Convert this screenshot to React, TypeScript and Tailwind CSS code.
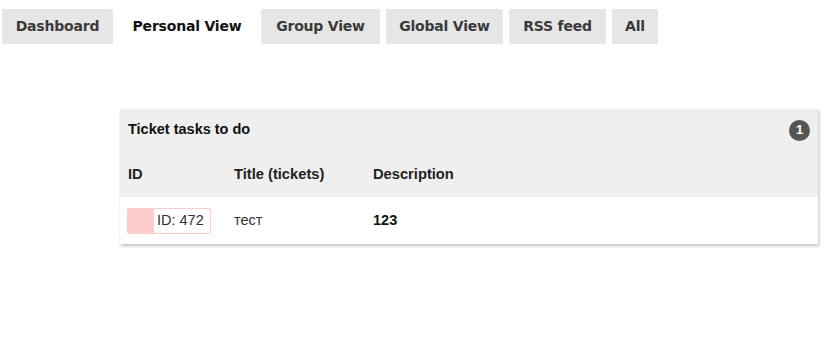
import React from 'react';

const tabs = [
  { label: 'Dashboard', w: 'w-[111px]', active: false },
  { label: 'Personal View', w: 'w-[136px]', active: true },
  { label: 'Group View', w: 'w-[119px]', active: false },
  { label: 'Global View', w: 'w-[117px]', active: false },
  { label: 'RSS feed', w: 'w-[97px]', active: false },
  { label: 'All', w: 'w-[46px]', active: false },
];

export default function App() {
  return (
    <div className="w-[840px] h-[347px] bg-white">
      <div className="flex gap-[6px] pl-[2px] pt-[9px] font-['DejaVu_Sans',sans-serif]">
        {tabs.map(t => (
          <div
            key={t.label}
            className={`${t.w} h-[35px] flex items-center justify-center rounded-t-[2px] text-[14px] font-bold tracking-[-0.2px] ${
              t.active ? 'bg-white text-[#111]' : 'bg-[#e6e6e6] text-[#3a3a3a]'
            }`}
          >
            {t.label}
          </div>
        ))}
      </div>

      <div className="ml-[120px] mt-[65px] w-[698px] bg-white shadow-[1px_2px_3px_rgba(0,0,0,0.25)] font-['Liberation_Sans',Arial,sans-serif] text-[#222]">
        <div className="bg-[#efefef]">
          <div className="flex items-center justify-between h-[42px] pl-[8px] pr-[8px]">
            <span className="text-[14.5px] font-bold text-[#111]">Ticket tasks to do</span>
            <span className="w-[21px] h-[21px] rounded-full bg-[#555] text-white text-[13px] font-bold flex items-center justify-center">
              1
            </span>
          </div>
          <div className="flex items-center h-[46px] text-[14.7px] font-bold text-[#222]">
            <span className="w-[114px] pl-[8px]">ID</span>
            <span className="w-[139px]">Title (tickets)</span>
            <span>Description</span>
          </div>
        </div>
        <div className="flex items-center h-[47px] text-[14.5px]">
          <div className="w-[114px] pl-[7px]">
            <div className="flex items-center w-[84px] h-[26px] border border-[#ffcccc] rounded-[2px] overflow-hidden">
              <div className="w-[26px] h-full bg-[#ffcccc]" />
              <span className="pl-[3px] text-[#333]">ID: 472</span>
            </div>
          </div>
          <span className="w-[139px] text-[#333]">тест</span>
          <span className="font-bold text-[#111]">123</span>
        </div>
      </div>
    </div>
  );
}
